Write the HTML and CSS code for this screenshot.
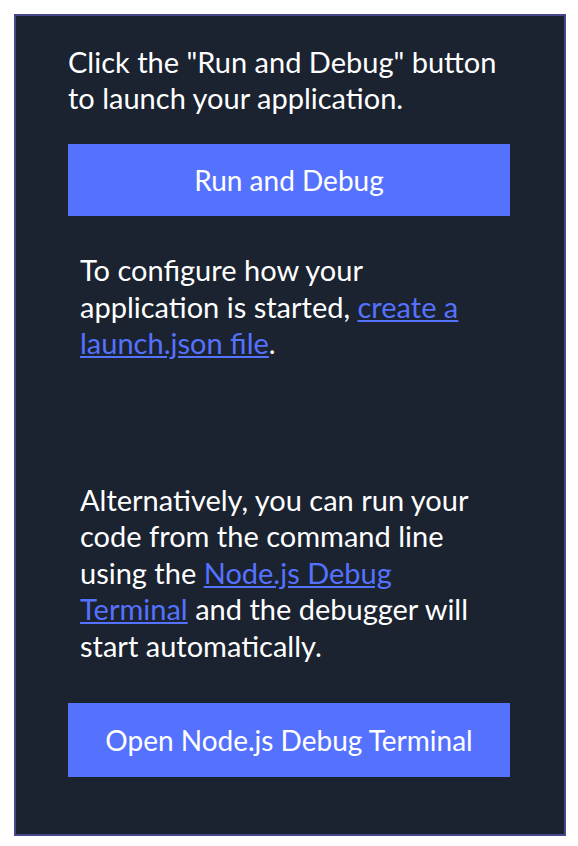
FILE: index.html
```html
<!DOCTYPE html>
<html lang="en">
<head>
<meta charset="utf-8">
<title>Run and Debug</title>
<link rel="stylesheet" href="styles.css">
</head>
<body>
<div class="panel">
  <p class="intro">Click the "Run and Debug" button to launch your application.</p>
  <button class="btn">Run and Debug</button>
  <p class="note">To configure how your application is started, <a href="#">create a launch.json file</a>.</p>
  <p class="note alt">Alternatively, you can run your code from the command line using the <a href="#">Node.js Debug Terminal</a> and the debugger will start automatically.</p>
  <button class="btn btn-last">Open Node.js Debug Terminal</button>
</div>
</body>
</html>
```
FILE: styles.css
```css
html, body {
  margin: 0;
  background: #ffffff;
}
body {
  padding: 14px;
  font-family: Lato, "Open Sans", sans-serif;
}
.panel {
  box-sizing: border-box;
  width: 552px;
  height: 822px;
  border: 2px solid #47478c;
  background: #1b2230;
  padding: 0 54px 0 52px;
  color: #ffffff;
  font-size: 29px;
  line-height: 36px;
}
.intro {
  margin: 0;
  padding-top: 28px;
}
.btn {
  display: block;
  width: 100%;
  height: 72px;
  margin-top: 28px;
  border: none;
  background: #5572ff;
  color: #ffffff;
  font: inherit;
  font-size: 28px;
  padding: 0;
}
.note {
  margin: 36px 0 0;
  padding: 0 12px;
  line-height: 36.5px;
}
.note a {
  color: #5572ff;
  text-decoration: underline;
}
.alt {
  margin-top: 120px;
}
.btn-last {
  height: 74px;
  margin-top: 39px;
}
```
